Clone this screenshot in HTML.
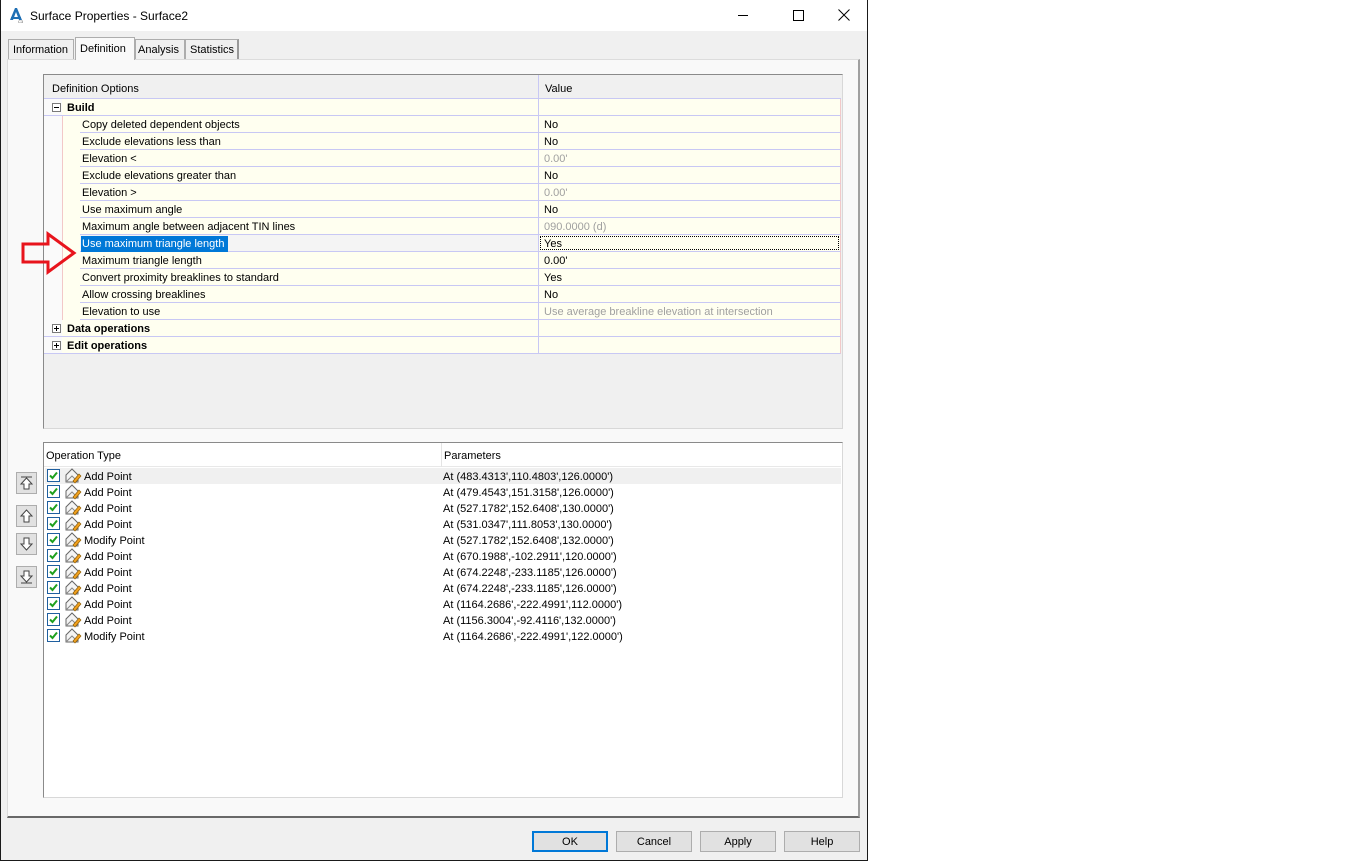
<!DOCTYPE html>
<html><head><meta charset="utf-8"><style>
*{margin:0;padding:0;box-sizing:border-box}
body{width:1357px;height:861px;background:#fff;font-family:"Liberation Sans",sans-serif;font-size:11px;color:#000;position:relative;overflow:hidden}
.a{position:absolute}
.win{left:0;top:0;width:868px;height:861px;background:#f0f0f0;border:1px solid #1a1a1a;border-top:none}
.title{left:1px;top:0;width:866px;height:31px;background:#fff}
.tab{top:39px;height:20px;border:1px solid #adadad;border-bottom:none;background:#f0f0f0;padding:3px 4px 0;font-size:11px}
.panel{left:7px;top:59px;width:853px;height:759px;background:#f9f9f9;border:1px solid #dcdcdc;border-right:2px solid #a0a0a0;border-bottom:2px solid #696969}
.grid{left:43px;top:74px;width:800px;height:355px;background:#f0f0f0;border:1px solid #8a8a8a;border-right-color:#d8d8d8;border-bottom-color:#d8d8d8}
.row{position:absolute;left:0;width:797px;height:17px}
.c1{position:absolute;left:36px;top:0;width:458px;height:17px;background:#fffff0;border-bottom:1px solid #c8c8f4;padding:3px 0 0 2px;white-space:nowrap}
.c2{position:absolute;left:494px;top:0;width:303px;height:17px;background:#fffff0;border-bottom:1px solid #c8c8f4;border-left:1px solid #c8c8f4;border-right:1px solid #f2c8c8;padding:3px 0 0 5px;white-space:nowrap}
.gr{color:#a0a0a0}
.grp .c1{left:0;width:494px;padding-left:23px;font-weight:bold}
.exp{position:absolute;left:8px;top:4px;width:9px;height:9px;border:1px solid #7a7a7a;background:#fff}
.exp:before{content:"";position:absolute;left:1px;top:3px;width:5px;height:1px;background:#000}
.pl:after{content:"";position:absolute;left:3px;top:1px;width:1px;height:5px;background:#000}
.list{left:43px;top:442px;width:800px;height:356px;background:#fff;border:1px solid #8a8a8a;border-right-color:#d8d8d8;border-bottom-color:#d8d8d8}
.lr{position:absolute;left:1px;width:796px;height:16px}
.lr span{position:absolute;top:3px}
.cb{position:absolute;left:2px;top:1px;width:13px;height:13px;border:1px solid #1f5f9f;background:#fff}
.btn{top:831px;width:76px;height:21px;background:#e1e1e1;border:1px solid #adadad;text-align:center;padding-top:4px;font-size:11px}
.ab{left:16px;width:21px;height:22px;background:#e1e1e1;border:1px solid #adadad}
</style></head><body>
<div class="a win"></div>
<div class="a title"></div>
<svg class="a" style="left:9px;top:7px" width="14" height="16"><path d="M1 13 L6 1 L8 1 L13 13 L10 13 L7 5 L4 13Z" fill="#1f6fb4"/><rect x="2" y="10" width="10" height="2" fill="#1f6fb4"/><text x="9" y="16" font-size="4" fill="#555">C3D</text></svg>
<div class="a" style="left:30px;top:9px;font-size:12px">Surface Properties - Surface2</div>
<div class="a" style="left:738px;top:15px;width:10px;height:1px;background:#000"></div>
<div class="a" style="left:793px;top:10px;width:11px;height:11px;border:1px solid #000"></div>
<svg class="a" style="left:838px;top:9px" width="12" height="12"><path d="M0.5 0.5L11.5 11.5M11.5 0.5L0.5 11.5" stroke="#000" stroke-width="1"/></svg>
<div class="a panel"></div>
<div class="a tab" style="left:8px;width:66px;padding-top:4px">Information</div>
<div class="a tab" style="left:75px;top:37px;width:60px;height:23px;background:#f9f9f9;padding-top:5px">Definition</div>
<div class="a tab" style="left:135px;width:50px;padding-left:2px;padding-top:4px">Analysis</div>
<div class="a tab" style="left:185px;width:54px;border-right:2px solid #999;padding-top:4px">Statistics</div>

<div class="a grid">
<div class="a" style="left:0;top:0;width:797px;height:24px;border-bottom:1px solid #c8c8f4"><span class="a" style="left:8px;top:8px">Definition Options</span><span class="a" style="left:494px;top:0;height:24px;border-left:1px solid #c8c8f4"></span><span class="a" style="left:501px;top:8px">Value</span></div>
<div class="row grp" style="top:24px"><div class="c1" style="background:linear-gradient(90deg,#fafafa 18px,#fffff0 18px)"><div class="exp"></div>Build</div><div class="c2"></div></div>
<div style="position:absolute;left:0;top:41px;width:18px;height:204px;background:#fafafa"></div>
<div style="position:absolute;left:18px;top:41px;width:18px;height:204px;background:#fffff0;border-left:1px solid #f2c8c8"></div>
<div class="row" style="top:41px"><div class="c1">Copy deleted dependent objects</div><div class="c2">No</div></div>
<div class="row" style="top:58px"><div class="c1">Exclude elevations less than</div><div class="c2">No</div></div>
<div class="row" style="top:75px"><div class="c1">Elevation &lt;</div><div class="c2 gr">0.00'</div></div>
<div class="row" style="top:92px"><div class="c1">Exclude elevations greater than</div><div class="c2">No</div></div>
<div class="row" style="top:109px"><div class="c1">Elevation &gt;</div><div class="c2 gr">0.00'</div></div>
<div class="row" style="top:126px"><div class="c1">Use maximum angle</div><div class="c2">No</div></div>
<div class="row" style="top:143px"><div class="c1">Maximum angle between adjacent TIN lines</div><div class="c2 gr">090.0000 (d)</div></div>
<div class="row" style="top:160px"><div class="c1" style="background:#f4f4f4;padding-top:1px"><span style="display:inline-block;background:#0078d7;color:#fff;padding:2px 4px 2px 1px;margin-left:-1px">Use maximum triangle length</span></div><div class="c2" style="background:#fffff0"><div style="position:absolute;left:1px;top:1px;right:1px;bottom:1px;border:1px dotted #000"></div>Yes</div></div>
<div class="row" style="top:177px"><div class="c1">Maximum triangle length</div><div class="c2">0.00'</div></div>
<div class="row" style="top:194px"><div class="c1">Convert proximity breaklines to standard</div><div class="c2">Yes</div></div>
<div class="row" style="top:211px"><div class="c1">Allow crossing breaklines</div><div class="c2">No</div></div>
<div class="row" style="top:228px"><div class="c1">Elevation to use</div><div class="c2 gr">Use average breakline elevation at intersection</div></div>
<div class="row grp" style="top:245px"><div class="c1" style="background:linear-gradient(90deg,#fafafa 18px,#fffff0 18px)"><div class="exp pl"></div>Data operations</div><div class="c2"></div></div>
<div class="row grp" style="top:262px"><div class="c1" style="background:linear-gradient(90deg,#fafafa 18px,#fffff0 18px)"><div class="exp pl"></div>Edit operations</div><div class="c2"></div></div>
</div>

<svg class="a" style="left:20px;top:231px" width="58" height="44"><path d="M3 13 L28 13 L28 3 L54 22 L28 41 L28 31 L3 31 Z" fill="none" stroke="#e8141c" stroke-width="3"/></svg>

<div class="a list">
<div class="a" style="left:0;top:0;width:797px;height:24px;border-bottom:1px solid #e8e8e8"><span class="a" style="left:2px;top:7px">Operation Type</span><span class="a" style="left:397px;top:0;height:24px;border-left:1px solid #e4e4e4"></span><span class="a" style="left:400px;top:7px">Parameters</span></div>
<div id="rows"></div>
</div>

<div class="a ab" style="top:472px"><svg width="19" height="20"><path d="M4 4H15M9.5 5L4 11H7V16H12V11H15Z" fill="#fff" stroke="#444"/></svg></div>
<div class="a ab" style="top:505px"><svg width="19" height="20"><path d="M9.5 4L4 10H7V16H12V10H15Z" fill="#fff" stroke="#444"/></svg></div>
<div class="a ab" style="top:533px"><svg width="19" height="20"><path d="M9.5 16L4 10H7V4H12V10H15Z" fill="#fff" stroke="#444"/></svg></div>
<div class="a ab" style="top:566px"><svg width="19" height="20"><path d="M4 16H15M9.5 15L4 9H7V4H12V9H15Z" fill="#fff" stroke="#444"/></svg></div>

<div class="a btn" style="left:532px;border:2px solid #0078d7;padding-top:3px">OK</div>
<div class="a btn" style="left:616px">Cancel</div>
<div class="a btn" style="left:700px">Apply</div>
<div class="a btn" style="left:784px">Help</div>

<script>
var d=[["Add Point","At (483.4313',110.4803',126.0000')"],["Add Point","At (479.4543',151.3158',126.0000')"],["Add Point","At (527.1782',152.6408',130.0000')"],["Add Point","At (531.0347',111.8053',130.0000')"],["Modify Point","At (527.1782',152.6408',132.0000')"],["Add Point","At (670.1988',-102.2911',120.0000')"],["Add Point","At (674.2248',-233.1185',126.0000')"],["Add Point","At (674.2248',-233.1185',126.0000')"],["Add Point","At (1164.2686',-222.4991',112.0000')"],["Add Point","At (1156.3004',-92.4116',132.0000')"],["Modify Point","At (1164.2686',-222.4991',122.0000')"]];
var h="";
d.forEach(function(r,i){h+='<div class="lr" style="top:'+(25+i*16)+'px;'+(i==0?'background:#f0f0f0':'')+'"><div class="cb"><svg width="11" height="11"><path d="M2 5.5L4.5 8L9 2.5" fill="none" stroke="#1ea01e" stroke-width="2"/></svg></div><svg style="position:absolute;left:19px;top:0" width="18" height="16"><path d="M2 7L8 1L14 7V14H2Z" fill="#f4f4f4" stroke="#666"/><path d="M2 14L8 8L14 14" fill="none" stroke="#888"/><path d="M9 13L15 6L17 8L11 15Z" fill="#f0a020" stroke="#8a5a00" stroke-width=".6"/></svg><span style="left:39px">'+r[0]+'</span><span style="left:398px">'+r[1]+'</span></div>'});
document.getElementById("rows").innerHTML=h;
</script>
</body></html>
